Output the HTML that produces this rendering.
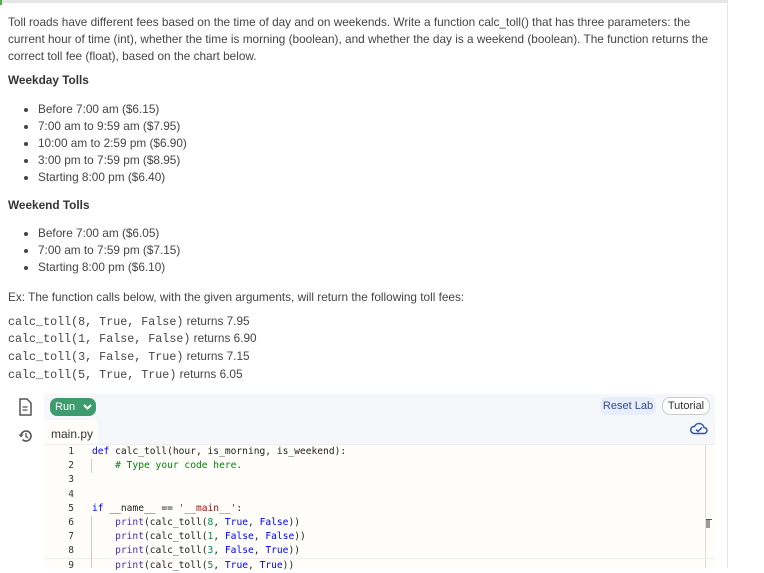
<!DOCTYPE html>
<html><head><style>
body{margin:0;width:764px;height:568px;overflow:hidden;background:#fff;font-family:"Liberation Sans",sans-serif;color:#3a3a3a;position:relative}
.top{position:absolute;left:0;top:0;width:728px;height:3px;background:#e6e6e6}
.top:before{content:"";position:absolute;left:0;top:0;width:2px;height:5px;background:#5a5}
.vr{position:absolute;left:727px;top:0;width:1px;height:568px;background:#e4e4e4}
.t{position:absolute;left:8px;font-size:11.8px;line-height:17px;white-space:nowrap;color:#444}
.b{font-weight:bold;color:#333}
ul{position:absolute;left:0;margin:0;padding-left:38px;font-size:11.8px;line-height:17px;color:#444}
.m{font-family:"Liberation Mono",monospace;font-size:11.7px;color:#444}
.tb{position:absolute;left:44px;top:394px;width:671px;height:50px;background:#f5f7fa}
.ed{position:absolute;left:44px;top:444px;width:671px;height:124px;background:#fefdfa;border-top:1px solid #eee}
.code{position:absolute;font-family:"DejaVu Sans Mono",monospace;font-size:9.6px;line-height:14.2px;white-space:pre;color:#222}
.ln{position:absolute;left:60px;top:445px;width:14px;text-align:right;font-family:"DejaVu Sans Mono",monospace;font-size:9.5px;line-height:14.2px;color:#333;white-space:pre}
.kw{color:#00f}.cm{color:#080}.st{color:#a31515}.nu{color:#098658}.fn{color:#4b2fb0}
</style></head><body>
<div class="top"></div><div class="vr"></div>
<div class="t" style="top:14px">Toll roads have different fees based on the time of day and on weekends. Write a function calc_toll() that has three parameters: the</div>
<div class="t" style="top:31px">current hour of time (int), whether the time is morning (boolean), and whether the day is a weekend (boolean). The function returns the</div>
<div class="t" style="top:48px">correct toll fee (float), based on the chart below.</div>
<div class="t b" style="top:72px">Weekday Tolls</div>
<ul style="top:101px"><li>Before 7:00 am ($6.15)</li><li>7:00 am to 9:59 am ($7.95)</li><li>10:00 am to 2:59 pm ($6.90)</li><li>3:00 pm to 7:59 pm ($8.95)</li><li>Starting 8:00 pm ($6.40)</li></ul>
<div class="t b" style="top:197px">Weekend Tolls</div>
<ul style="top:225px"><li>Before 7:00 am ($6.05)</li><li>7:00 am to 7:59 pm ($7.15)</li><li>Starting 8:00 pm ($6.10)</li></ul>
<div class="t" style="top:289px">Ex: The function calls below, with the given arguments, will return the following toll fees:</div>
<div class="t" style="top:313px"><span class="m">calc_toll(8, True, False)</span> returns 7.95</div>
<div class="t" style="top:330px"><span class="m">calc_toll(1, False, False)</span> returns 6.90</div>
<div class="t" style="top:348px"><span class="m">calc_toll(3, False, True)</span> returns 7.15</div>
<div class="t" style="top:366px"><span class="m">calc_toll(5, True, True)</span> returns 6.05</div>

<div class="tb"></div>
<svg style="position:absolute;left:18px;top:398px" width="14" height="18" viewBox="0 0 14 18"><path d="M2 1h7l4 4v12H2z" fill="none" stroke="#555" stroke-width="1.5"/><path d="M4.5 9h5M4.5 12h5" stroke="#555" stroke-width="1.3"/></svg>
<svg style="position:absolute;left:18px;top:429px" width="15" height="14" viewBox="0 0 15 14"><path d="M3 7a5 5 0 1 1 1.5 3.6" fill="none" stroke="#555" stroke-width="1.6"/><path d="M0.5 5.5L3 8.5 5.5 5.5" fill="#555"/><path d="M8 4v3.5l2 1.5" fill="none" stroke="#555" stroke-width="1.4"/></svg>
<div style="position:absolute;left:50px;top:398px;width:46px;height:18px;border-radius:7px;background:#3e9b6e;color:#fff;font-size:11px;line-height:18px;padding-left:5px;box-sizing:border-box">Run</div>
<svg style="position:absolute;left:83px;top:404px" width="9" height="6" viewBox="0 0 9 6"><path d="M1 1l3.5 3.5L8 1" fill="none" stroke="#fff" stroke-width="2"/></svg>
<div style="position:absolute;left:44px;top:420px;width:54px;height:25px;background:#fefdfa;border-radius:4px 4px 0 0"></div>
<div style="position:absolute;left:51px;top:427px;font-size:12px;color:#333">main.py</div>
<div style="position:absolute;left:600px;top:397px;width:56px;height:18px;border-radius:7px;background:#e8edfb;color:#2f4b8f;font-size:11px;line-height:18px;text-align:center">Reset Lab</div>
<div style="position:absolute;left:662px;top:397px;width:46px;height:16px;border-radius:8px;border:1px solid #ccc;background:#fff;color:#333;font-size:11px;line-height:16px;text-align:center">Tutorial</div>
<svg style="position:absolute;left:690px;top:421px" width="18" height="14" viewBox="0 0 18 14"><path d="M4 12.5h10a3 3 0 0 0 0-6 5 5 0 0 0-9.5-1A3.3 3.3 0 0 0 4 12.5z" fill="none" stroke="#2a5aa8" stroke-width="1.5"/><path d="M6 8.5l2 2 4-4" fill="none" stroke="#2a5aa8" stroke-width="1.5"/></svg>
<div class="ed"></div>
<div style="position:absolute;left:705px;top:444px;width:1px;height:124px;background:#ddd"></div>
<div style="position:absolute;left:706px;top:519px;width:6px;height:1px;background:#555"></div>
<div style="position:absolute;left:706px;top:520px;width:4px;height:8px;background:#999"></div>
<div style="position:absolute;left:44px;top:558px;width:671px;height:1px;background:#eee"></div>
<div style="position:absolute;left:91px;top:459px;width:1px;height:14px;background:#ccc"></div>
<div style="position:absolute;left:91px;top:516px;width:1px;height:52px;background:#ccc"></div>
<div class="ln">1
2
3
4
5
6
7
8
9</div>
<div class="code" style="left:92px;top:445px"><span class="kw">def</span> calc_toll(hour, is_morning, is_weekend):
    <span class="cm"># Type your code here.</span>


<span class="kw">if</span> __name__ == <span class="st">'__main__'</span>:
    <span class="fn">print</span>(calc_toll(<span class="nu">8</span>, <span class="kw">True</span>, <span class="kw">False</span>))
    <span class="fn">print</span>(calc_toll(<span class="nu">1</span>, <span class="kw">False</span>, <span class="kw">False</span>))
    <span class="fn">print</span>(calc_toll(<span class="nu">3</span>, <span class="kw">False</span>, <span class="kw">True</span>))
    <span class="fn">print</span>(calc_toll(<span class="nu">5</span>, <span class="kw">True</span>, <span class="kw">True</span>))</div>
</body></html>
